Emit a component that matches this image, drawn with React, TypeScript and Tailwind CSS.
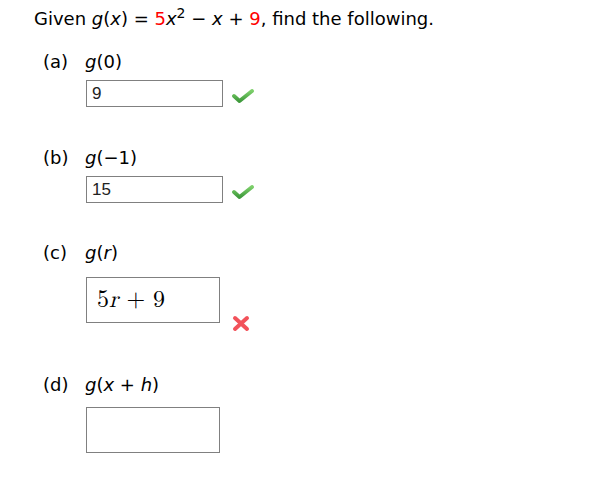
import React from "react";

function Check() {
  return (
    <svg width="22" height="14" viewBox="0 0 22 14" className="ml-[9px] mt-[9px]">
      <defs>
        <linearGradient id="ck" x1="0" y1="0" x2="0" y2="1">
          <stop offset="0" stopColor="#7ccf6a" />
          <stop offset="1" stopColor="#3f9a3c" />
        </linearGradient>
      </defs>
      <path d="M2 7 L7.5 12 L20 2" fill="none" stroke="url(#ck)" strokeWidth="3.8" strokeLinejoin="round" strokeLinecap="round" />
    </svg>
  );
}

function Cross() {
  return (
    <svg width="18" height="17" viewBox="0 0 18 17" className="ml-[12px] mt-[38px]">
      <path d="M3 3 L15 14 M15 3 L3 14" fill="none" stroke="#f2525a" strokeWidth="4" strokeLinecap="round" />
    </svg>
  );
}

const sans = { fontFamily: "'Liberation Sans', Arial, sans-serif" };

function Part(props: { tag: string; fn: React.ReactNode; children: React.ReactNode; gap: string }) {
  return (
    <div>
      <div className="flex pl-[9px]">
        <span className="w-[42px]">({props.tag})</span>
        <span>{props.fn}</span>
      </div>
      <div className={"flex pl-[52px] " + props.gap}>{props.children}</div>
    </div>
  );
}

export default function App() {
  const g = <i>g</i>;
  return (
    <div className="min-h-screen w-[591px] bg-white pl-[34px] pt-[9px] text-[18px] leading-[20px] text-black" style={{ fontFamily: "Verdana, 'DejaVu Sans', sans-serif" }}>
      <p>
        Given {g}(<i>x</i>) = <span className="text-[#ff0000]">5</span><i>x</i>
        <sup className="text-[14px]">2</sup> − <i>x</i> + <span className="text-[#ff0000]">9</span>, find the following.
      </p>

      <div className="mt-[23px]">
        <Part tag="a" fn={<>{g}(0)</>} gap="mt-[8px]">
          <div className="h-[27px] w-[137px] border border-[#808080] pl-[5px] pt-[2px] text-[17px] leading-[21px] text-[#222]" style={sans}>9</div>
          <Check />
        </Part>
      </div>

      <div className="mt-[41px]">
        <Part tag="b" fn={<>{g}(−1)</>} gap="mt-[8px]">
          <div className="h-[27px] w-[137px] border border-[#808080] pl-[5px] pt-[2px] text-[17px] leading-[21px] text-[#222]" style={sans}>15</div>
          <Check />
        </Part>
      </div>

      <div className="mt-[40px]">
        <Part tag="c" fn={<>{g}(<i>r</i>)</>} gap="mt-[14px]">
          <div className="h-[46px] w-[134px] border border-[#808080] pl-[10px] pt-[8px] text-[24px] leading-[28px]" style={{ fontFamily: "'Latin Modern Math', 'Liberation Serif', 'Times New Roman', serif" }}>
            5<i>r</i> + 9
          </div>
          <Cross />
        </Part>
      </div>

      <div className="mt-[43px]">
        <Part tag="d" fn={<>{g}(<i>x</i> + <i>h</i>)</>} gap="mt-[12px]">
          <div className="h-[46px] w-[134px] border border-[#808080]" />
        </Part>
      </div>
    </div>
  );
}
